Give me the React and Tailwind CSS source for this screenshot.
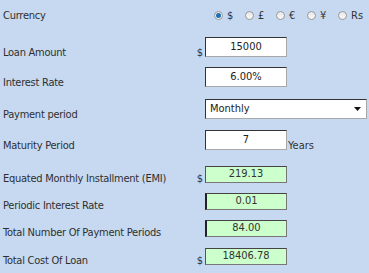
import React from "react";

const font = { fontFamily: '"DejaVu Sans Condensed", "DejaVu Sans", sans-serif' };

function Radio({ checked, label }) {
  return (
    <div className="flex items-center w-[31px]">
      <span className="relative w-[9px] h-[9px] rounded-full border border-[#9a9a9a] bg-gradient-to-b from-[#e8e8e8] to-[#f8f8f8] flex items-center justify-center">
        {checked && <span className="w-[5px] h-[5px] rounded-full bg-[#1f6fb5]" />}
      </span>
      <span className="ml-[4px] text-[11px] leading-[13px] text-[#333]">{label}</span>
    </div>
  );
}

function Row({ label, children, className = "" }) {
  return (
    <div className={"flex items-end " + className}>
      <div className="w-[193px] text-[11px] leading-[13px] text-[#2f2f2f] tracking-[-0.25px] mb-[-2px]">{label}</div>
      {children}
    </div>
  );
}

function Dollar({ show }) {
  return (
    <span className="w-[9px] pr-[2px] text-right text-[11px] leading-[13px] text-[#333] mb-[-2px]">{show ? "$" : ""}</span>
  );
}

function InputBox({ value }) {
  return (
    <div className="w-[82px] h-[20px] bg-white border-t border-l border-t-[#333] border-l-[#333] border-r border-b border-r-[#a8a8a8] border-b-[#a8a8a8] flex items-center justify-center text-[11px] text-[#222]">
      {value}
    </div>
  );
}

function GreenBox({ value, thick }) {
  return (
    <div
      className={
        "w-[82px] h-[17px] bg-[#ccffcc] border-t border-t-[#444] border-r border-b border-r-[#777] border-b-[#777] flex items-center justify-center text-[11px] text-[#333] " +
        (thick ? "border-l-2 border-l-[#222]" : "border-l border-l-[#555]")
      }
    >
      {value}
    </div>
  );
}

export default function App() {
  return (
    <div className="w-[369px] h-[273px] bg-[#c6d9f1] pl-[3px] overflow-hidden" style={font}>
      <div className="flex items-center h-[30px]">
        <div className="w-[211px] text-[11px] leading-[13px] text-[#2f2f2f] tracking-[-0.25px]">Currency</div>
        <div className="flex">
          <Radio checked label="$" />
          <Radio label="£" />
          <Radio label="€" />
          <Radio label="¥" />
          <Radio label="Rs" />
        </div>
      </div>
      <Row label="Loan Amount" className="mt-[7px]">
        <Dollar show />
        <InputBox value="15000" />
      </Row>
      <Row label="Interest Rate" className="mt-[10px]">
        <Dollar />
        <InputBox value="6.00%" />
      </Row>
      <Row label="Payment period" className="mt-[12px]">
        <Dollar />
        <div className="w-[162px] h-[20px] bg-white border-t border-l border-t-[#333] border-l-[#333] border-r border-b border-r-[#a8a8a8] border-b-[#a8a8a8] flex items-center justify-between pl-[4px] pr-[5px] text-[11px] text-[#222]">
          <span>Monthly</span>
          <svg width="7" height="4" viewBox="0 0 7 4"><path d="M0 0h7L3.5 4z" fill="#111" /></svg>
        </div>
      </Row>
      <Row label="Maturity Period" className="mt-[11px]">
        <Dollar />
        <InputBox value="7" />
        <span className="ml-[1px] text-[11px] leading-[13px] text-[#333] mb-[-2px]">Years</span>
      </Row>
      <Row label="Equated Monthly Installment (EMI)" className="mt-[16px]">
        <Dollar show />
        <GreenBox value="219.13" />
      </Row>
      <Row label="Periodic Interest Rate" className="mt-[10px]">
        <Dollar />
        <GreenBox value="0.01" thick />
      </Row>
      <Row label="Total Number Of Payment Periods" className="mt-[10px]">
        <Dollar />
        <GreenBox value="84.00" thick />
      </Row>
      <Row label="Total Cost Of Loan" className="mt-[11px]">
        <Dollar show />
        <GreenBox value="18406.78" />
      </Row>
    </div>
  );
}
